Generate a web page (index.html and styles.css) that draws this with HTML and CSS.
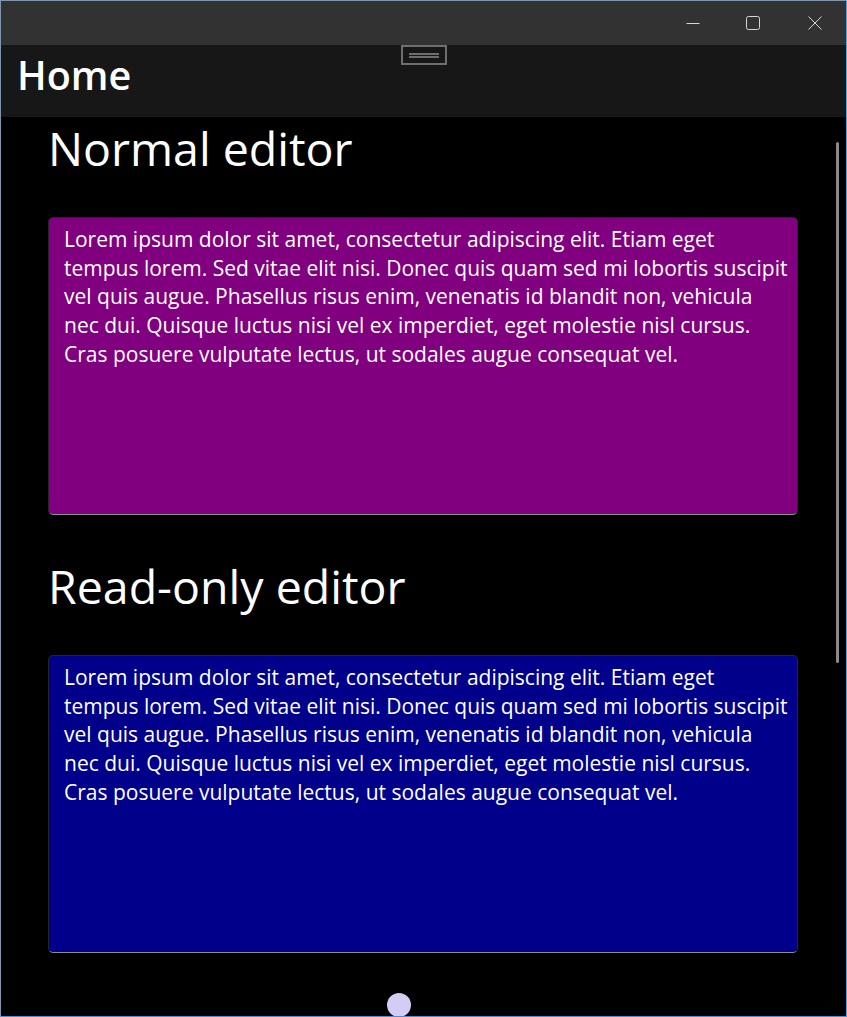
FILE: index.html
```html
<!DOCTYPE html>
<html>
<head>
<meta charset="utf-8">
<link rel="stylesheet" href="styles.css">
</head>
<body>
<div class="window">
  <div class="titlebar">
    <div class="caption-btn">
      <svg width="14" height="14" viewBox="0 0 14 14"><line x1="0.5" y1="7.5" x2="13.5" y2="7.5" stroke="#d6d6d6" stroke-width="1"/></svg>
    </div>
    <div class="caption-btn">
      <svg width="14" height="14" viewBox="0 0 14 14"><rect x="0.5" y="0.5" width="13" height="13" rx="2" fill="none" stroke="#d6d6d6" stroke-width="1"/></svg>
    </div>
    <div class="caption-btn caption-close">
      <svg width="14" height="14" viewBox="0 0 14 14"><path d="M0.5 0.5 L13.5 13.5 M13.5 0.5 L0.5 13.5" stroke="#d6d6d6" stroke-width="1"/></svg>
    </div>
  </div>
  <div class="header">
    <h1 class="header-title">Home</h1>
    <svg class="drag-handle" width="46" height="20" viewBox="0 0 46 20"><rect x="1" y="1" width="44" height="18" fill="none" stroke="#6e6e6e" stroke-width="2"/><rect x="8" y="8" width="30" height="2" fill="#6e6e6e"/><rect x="8" y="11" width="30" height="2" fill="#6e6e6e"/></svg>
  </div>
  <div class="content">
    <section class="section">
      <h2 class="section-title">Normal editor</h2>
      <div class="editor editor-normal">Lorem ipsum dolor sit amet, consectetur adipiscing elit. Etiam eget<br>tempus lorem. Sed vitae elit nisi. Donec quis quam sed mi lobortis suscipit<br>vel quis augue. Phasellus risus enim, venenatis id blandit non, vehicula<br>nec dui. Quisque luctus nisi vel ex imperdiet, eget molestie nisl cursus.<br>Cras posuere vulputate lectus, ut sodales augue consequat vel.</div>
    </section>
    <section class="section">
      <h2 class="section-title">Read-only editor</h2>
      <div class="editor editor-readonly">Lorem ipsum dolor sit amet, consectetur adipiscing elit. Etiam eget<br>tempus lorem. Sed vitae elit nisi. Donec quis quam sed mi lobortis suscipit<br>vel quis augue. Phasellus risus enim, venenatis id blandit non, vehicula<br>nec dui. Quisque luctus nisi vel ex imperdiet, eget molestie nisl cursus.<br>Cras posuere vulputate lectus, ut sodales augue consequat vel.</div>
    </section>
    <div class="scrollbar"></div>
  </div>
  <div class="touch-dot"></div>
</div>
</body>
</html>
```
FILE: styles.css
```css
* { box-sizing: border-box; }
html, body {
  margin: 0;
  padding: 0;
  background: #000;
  overflow: hidden;
}
body {
  font-family: "Open Sans", "Noto Sans", sans-serif;
  color: #fff;
}
.window {
  position: relative;
  width: 847px;
  height: 1017px;
  border: 1px solid #7f96ad;
  border-right-color: #5f9fd4;
  border-bottom-color: #4a8fdc;
  background: #000;
  overflow: hidden;
  display: flex;
  flex-direction: column;
}
.titlebar {
  height: 44px;
  background: #323232;
  display: flex;
  justify-content: flex-end;
  flex-shrink: 0;
}
.caption-btn {
  width: 60px;
  height: 44px;
  display: flex;
  align-items: center;
  justify-content: center;
  padding-bottom: 1px;
}
.caption-close { width: 63px; }
.header {
  position: relative;
  height: 72px;
  background: #171717;
  flex-shrink: 0;
  padding-left: 16px;
}
.header-title {
  margin: 0;
  font-size: 39.5px;
  font-weight: 600;
  line-height: 60px;
}
.drag-handle {
  position: absolute;
  left: 400px;
  top: 0;
}
.content {
  position: relative;
  flex: 1;
  padding: 1px 0 0 47px;
}
.section-title {
  margin: 0;
  font-size: 46.5px;
  font-weight: 400;
  line-height: 60px;
}
.editor {
  width: 750px;
  height: 298px;
  margin-top: 39px;
  margin-bottom: 41px;
  border: 1px solid #262626;
  border-bottom-color: #8e8e8e;
  border-radius: 5px;
  padding: 7px 6px 0 15px;
  font-size: 21px;
  line-height: 28.7px;
  white-space: nowrap;
  overflow: hidden;
}
.editor-normal { background: #800080; }
.editor-readonly { background: #00008b; }
.scrollbar {
  position: absolute;
  left: 835px;
  top: 25px;
  width: 3px;
  height: 521px;
  border-radius: 2px;
  background: #8a8a8a;
}
.touch-dot {
  position: absolute;
  left: 386px;
  top: 992px;
  width: 24px;
  height: 24px;
  border-radius: 50%;
  background: #d5ccf6;
}
```
